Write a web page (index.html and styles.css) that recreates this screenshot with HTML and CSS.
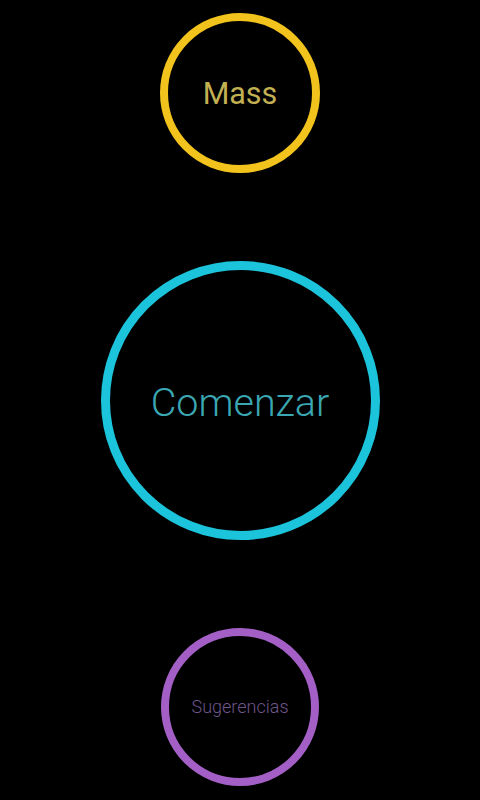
FILE: index.html
```html
<!DOCTYPE html>
<html lang="es">
<head>
<meta charset="utf-8">
<title>Menu</title>
<link rel="stylesheet" href="styles.css">
</head>
<body>
<main class="screen">
  <div class="ring ring-small ring-yellow"><span class="label label-mass">Mass</span></div>
  <div class="ring ring-large ring-cyan"><span class="label label-start">Comenzar</span></div>
  <div class="ring ring-small ring-purple"><span class="label label-tips">Sugerencias</span></div>
</main>
</body>
</html>
```
FILE: styles.css
```css
html, body {
  margin: 0;
  padding: 0;
  background: #000;
}
.screen {
  width: 480px;
  height: 800px;
  display: flex;
  flex-direction: column;
  align-items: center;
  padding-top: 13px;
  gap: 88px;
  box-sizing: border-box;
  font-family: Roboto, "Liberation Sans", sans-serif;
}
.ring {
  box-sizing: border-box;
  border-radius: 50%;
  display: flex;
  align-items: center;
  justify-content: center;
  flex-shrink: 0;
}
.ring-small {
  width: 160px;
  height: 160px;
  border-width: 8px;
  border-style: solid;
}
.ring-large {
  width: 279px;
  height: 279px;
  border-width: 9px;
  border-style: solid;
}
.ring-yellow { border-color: #f2c31c; }
.ring-cyan { border-color: #1cc4db; }
.ring-purple { border-color: #a45fc6; width: 158px; height: 158px; }
.label { line-height: 1; }
.label-mass {
  color: #c2b053;
  font-size: 30.5px;
  margin-top: 2px;
}
.label-start {
  color: #3aa7b3;
  font-size: 39.5px;
  font-weight: 300;
  margin-top: 4px;
}
.label-tips {
  color: #6f5689;
  font-size: 18px;
  font-weight: 300;
  margin-top: 0;
}
```
